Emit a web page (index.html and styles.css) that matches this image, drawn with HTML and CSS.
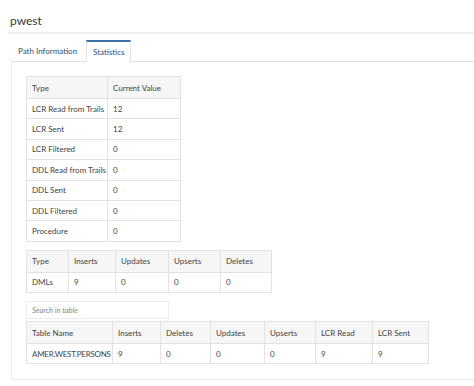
FILE: index.html
```html
<!DOCTYPE html>
<html lang="en">
<head>
  <meta charset="UTF-8">
  <title>pwest - Statistics</title>
  <link rel="stylesheet" href="styles.css">
</head>
<body>
  <header class="page-head">
    <h1>pwest</h1>
  </header>

  <nav class="tabs">
    <span class="tab">Path Information</span>
    <span class="tab active">Statistics</span>
  </nav>

  <section class="panel">
    <table class="grid t-summary">
      <thead>
        <tr><th class="w81">Type</th><th class="w73">Current Value</th></tr>
      </thead>
      <tbody>
        <tr><td>LCR Read from Trails</td><td>12</td></tr>
        <tr><td>LCR Sent</td><td>12</td></tr>
        <tr><td>LCR Filtered</td><td>0</td></tr>
        <tr><td>DDL Read from Trails</td><td>0</td></tr>
        <tr><td>DDL Sent</td><td>0</td></tr>
        <tr><td>DDL Filtered</td><td>0</td></tr>
        <tr><td>Procedure</td><td>0</td></tr>
      </tbody>
    </table>

    <table class="grid t-dml">
      <thead>
        <tr>
          <th class="w42">Type</th><th class="w47">Inserts</th><th class="w53">Updates</th>
          <th class="w52">Upserts</th><th class="w51">Deletes</th>
        </tr>
      </thead>
      <tbody>
        <tr><td>DMLs</td><td>9</td><td>0</td><td>0</td><td>0</td></tr>
      </tbody>
    </table>

    <input class="search" type="text" placeholder="Search in table">

    <table class="grid t-tables">
      <thead>
        <tr>
          <th class="w86">Table Name</th><th class="w48">Inserts</th><th class="w50">Deletes</th>
          <th class="w54">Updates</th><th class="w51">Upserts</th><th class="w57">LCR Read</th>
          <th class="w56">LCR Sent</th>
        </tr>
      </thead>
      <tbody>
        <tr><td class="name">AMER.WEST.PERSONS</td><td>9</td><td>0</td><td>0</td><td>0</td><td>9</td><td>9</td></tr>
      </tbody>
    </table>
  </section>
</body>
</html>
```

FILE: styles.css
```css
body {
  font-family: 'Lato', 'Open Sans', sans-serif;
  color: #333;
  background: #fff;
  margin: 0;
  padding: 0;
}
.page-head {
  margin-left: 8px;
  height: 32px;
  border-bottom: 2px solid #f0f0f0;
}
.page-head h1 {
  margin: 0;
  padding: 13px 0 0 2px;
  font-size: 12px;
  font-weight: 400;
  line-height: 15px;
  color: #383838;
}
.tabs {
  display: flex;
  margin: 6px 0 0 11px;
  border-bottom: 1px solid #e2e2e2;
  height: 21px;
}
.tab {
  flex-shrink: 0;
  white-space: nowrap;
  font-size: 8px;
  line-height: 18px;
  padding: 2px 0 0 7px;
  width: 68px;
  color: #2a4f78;
}
.tab.active {
  width: 31px;
  padding: 0 6px 0 6px;
  margin-bottom: -1px;
  background: #fff;
  border: 1px solid #e2e2e2;
  border-top: 2px solid #3a72a8;
  border-bottom: none;
  line-height: 20px;
}
.panel {
  margin-left: 11px;
  border-left: 1px solid #ececec;
  border-bottom: 1px solid #ececec;
  padding: 14px 0 15px 14px;
  display: flex;
  flex-direction: column;
  align-items: flex-start;
}
.grid {
  border-collapse: collapse;
  table-layout: fixed;
  font-size: 8px;
  color: #444;
}
.grid th, .grid td {
  border: 1px solid #e2e2e2;
  padding: 0 0 0 5px;
  text-align: left;
  font-weight: 400;
  white-space: nowrap;
  overflow: hidden;
}
.grid th {
  background: #f6f6f6;
  height: 21px;
}
.grid td {
  height: 19.4px;
}
.t-summary { width: 154px; }
.t-dml {
  width: 245px;
  margin-top: 8px;
}
.search {
  margin-top: 8px;
  width: 143px;
  height: 18px;
  box-sizing: border-box;
  border: 1px solid #ececec;
  padding: 0 5px;
  font-family: 'Lato', 'Open Sans', sans-serif;
  font-size: 7.5px;
  font-style: italic;
}
.search::placeholder {
  color: #8a8a8a;
}
.t-tables {
  width: 402px;
  margin-top: 2px;
}
.t-tables td {
  height: 19px;
}
.t-tables .name {
  letter-spacing: -0.25px;
}
.w42 { width: 36px; }
.w47 { width: 41px; }
.w48 { width: 42px; }
.w50 { width: 44px; }
.w51 { width: 45px; }
.w52 { width: 46px; }
.w53 { width: 47px; }
.w54 { width: 48px; }
.w56 { width: 50px; }
.w57 { width: 51px; }
.w73 { width: 67px; }
.w81 { width: 75px; }
.w86 { width: 80px; }
```
